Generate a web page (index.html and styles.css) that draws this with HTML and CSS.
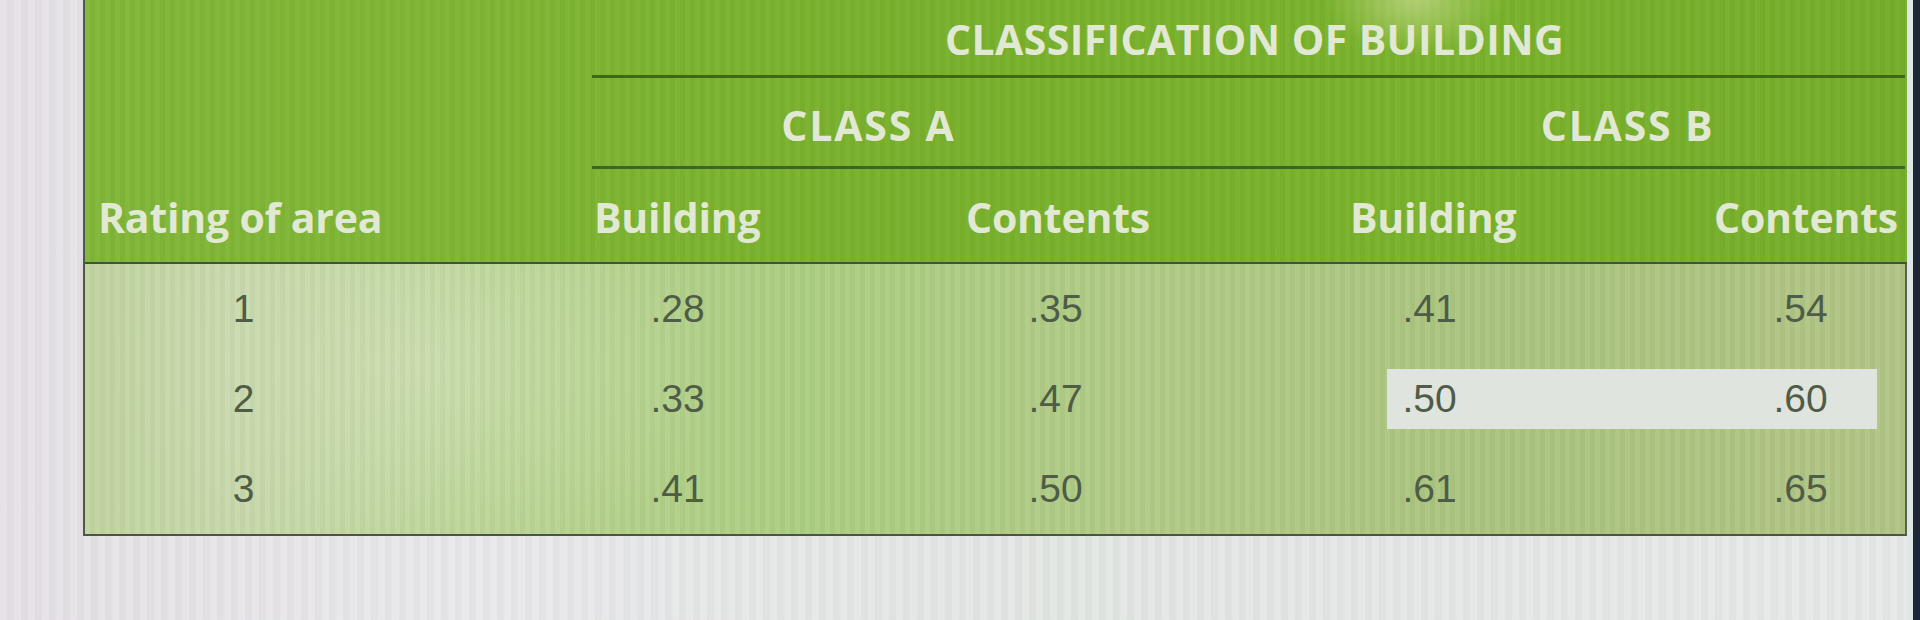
FILE: index.html
```html
<!DOCTYPE html>
<html lang="en">
<head>
<meta charset="utf-8">
<title>Classification of building</title>
<link rel="stylesheet" href="styles.css">
</head>
<body>
<div class="page">
  <div class="table">
    <div class="head">
      <div class="row row-a">
        <div class="span-all">CLASSIFICATION OF BUILDING</div>
      </div>
      <div class="row row-b">
        <div class="classes">
          <div class="class-name">CLASS A</div>
          <div class="class-name">CLASS B</div>
        </div>
      </div>
      <div class="row row-c">
        <div class="label">Rating of area</div>
        <div class="label">Building</div>
        <div class="label">Contents</div>
        <div class="label">Building</div>
        <div class="label">Contents</div>
      </div>
    </div>
    <div class="body">
      <div class="row data-row">
        <div class="cell c1">1</div>
        <div class="cell c2">.28</div>
        <div class="cell c3">.35</div>
        <div class="cell c4">.41</div>
        <div class="cell c5">.54</div>
      </div>
      <div class="row data-row">
        <div class="highlight"></div>
        <div class="cell c1">2</div>
        <div class="cell c2">.33</div>
        <div class="cell c3">.47</div>
        <div class="cell c4">.50</div>
        <div class="cell c5">.60</div>
      </div>
      <div class="row data-row">
        <div class="cell c1">3</div>
        <div class="cell c2">.41</div>
        <div class="cell c3">.50</div>
        <div class="cell c4">.61</div>
        <div class="cell c5">.65</div>
      </div>
    </div>
  </div>
  <div class="strip"></div>
  <div class="bezel"></div>
</div>
</body>
</html>
```
FILE: styles.css
```css
html, body {
  margin: 0;
  padding: 0;
}

body {
  width: 1920px;
  height: 620px;
  overflow: hidden;
  background:
    repeating-linear-gradient(90deg, rgba(255,255,255,0.16) 0 7px, rgba(205,212,208,0.10) 7px 14px),
    linear-gradient(90deg, #e2dde3 0%, #e6e5e8 25%, #dfe3e0 55%, #e3e6e5 100%);
  font-family: "Open Sans", "Lato", sans-serif;
}

.page {
  display: flex;
  height: 620px;
  padding-left: 83px;
  box-sizing: border-box;
}

.table {
  width: 1824px;
  align-self: flex-start;
  border-left: 2px solid #4f5b4a;
  box-sizing: border-box;
}

.strip {
  width: 6px;
  background: #dfe6e6;
}

.bezel {
  width: 7px;
  background: #1c2636;
}

.head {
  background:
    radial-gradient(ellipse 90px 55px at 1330px 0px, rgba(214,226,160,0.6), rgba(214,226,160,0) 100%),
    repeating-linear-gradient(90deg, rgba(255,255,255,0.03) 0 5px, rgba(0,0,0,0.02) 5px 10px),
    linear-gradient(90deg, #80b638 0%, #7fb534 20%, #78b02b 45%, #79b22c 75%, #75ad2a 100%);
  color: #e1e8d3;
  font-weight: 700;
  font-size: 41px;
  letter-spacing: -0.2px;
}

.row {
  display: grid;
  grid-template-columns: 291px 167px 179px 159px 173px;
  column-gap: 205px;
  padding-left: 13px;
}

.row-a {
  height: 78px;
}

.span-all {
  grid-column: 2 / 6;
  margin-left: -2px;
  margin-right: -18px;
  border-bottom: 3px solid #3d6625;
  display: flex;
  align-items: center;
  justify-content: center;
  padding-top: 2px;
  padding-left: 12px;
  white-space: nowrap;
  letter-spacing: 0.4px;
}

.row-b {
  height: 91px;
}

.classes {
  grid-column: 2 / 6;
  margin-left: -2px;
  margin-right: -18px;
  border-bottom: 3px solid #3d6625;
  display: grid;
  grid-template-columns: 553px 1fr;
  column-gap: 205px;
  align-items: center;
}

.class-name {
  text-align: center;
  padding-top: 6px;
  white-space: nowrap;
  letter-spacing: 1.8px;
}

.row-c {
  height: 95px;
  align-items: center;
  border-bottom: 2px solid #3e5730;
  box-sizing: border-box;
}

.label {
  white-space: nowrap;
  padding-top: 2px;
}

.body {
  background:
    repeating-linear-gradient(90deg, rgba(255,255,255,0.05) 0 5px, rgba(0,0,0,0.02) 5px 10px),
    radial-gradient(ellipse 300px 220px at 330px 100px, rgba(214,226,190,0.55), rgba(214,226,190,0) 100%),
    linear-gradient(90deg, #c0d39e 0%, #c6d7aa 8%, #b8d291 22%, #aacd7f 40%, #b0ca86 58%, #a9c37d 78%, #b0c485 100%);
  border-right: 2px solid #55654c;
  border-bottom: 2px solid #4b5446;
}

.data-row {
  height: 90px;
  align-items: center;
  font-family: "Liberation Sans", Arial, sans-serif;
  font-size: 39px;
  color: #4f5c47;
}

.cell {
  grid-row: 1;
  text-align: center;
}

.c1 { grid-column: 1; }
.c2 { grid-column: 2; }
.c3 { grid-column: 3; }
.c4 { grid-column: 4; }
.c5 { grid-column: 5; }

.highlight {
  grid-row: 1;
  grid-column: 4 / 6;
  margin-left: 37px;
  margin-right: 10px;
  height: 60px;
  background: #dfe4de;
}
```
